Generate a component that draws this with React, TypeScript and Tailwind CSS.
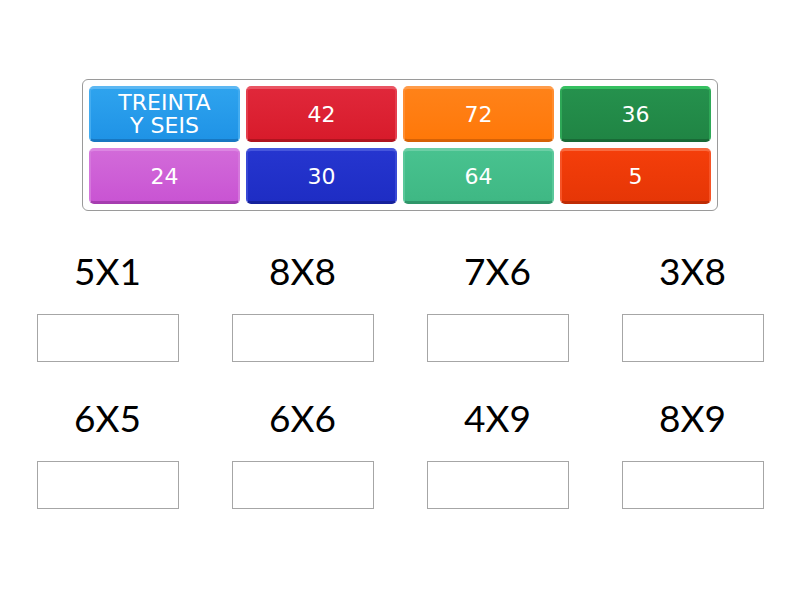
import React from 'react'

interface Tile {
  label: string
  cls: string
}

const tiles: Tile[] = [
  { label: 'TREINTA\nY SEIS', cls: 'bg-gradient-to-b from-[#2ea3ee] to-[#1f93e6] border-t-[#5cb8f3] border-x-[#43acf0] border-b-[#1777c2]' },
  { label: '42', cls: 'bg-gradient-to-b from-[#e0273a] to-[#d81b2b] border-t-[#ea5563] border-x-[#e43e4d] border-b-[#b0141f]' },
  { label: '72', cls: 'bg-gradient-to-b from-[#ff8218] to-[#ff7808] border-t-[#ff9c4a] border-x-[#ff8d30] border-b-[#d66206]' },
  { label: '36', cls: 'bg-gradient-to-b from-[#25914d] to-[#208544] border-t-[#35c060] border-x-[#2ea857] border-b-[#196a36]' },
  { label: '24', cls: 'bg-gradient-to-b from-[#d26ad9] to-[#c954d3] border-t-[#dc86e2] border-x-[#d577dc] border-b-[#a63db0]' },
  { label: '30', cls: 'bg-gradient-to-b from-[#2535cf] to-[#1e2dc4] border-t-[#4656dc] border-x-[#3848d6] border-b-[#15219c]' },
  { label: '64', cls: 'bg-gradient-to-b from-[#48c28f] to-[#3fb884] border-t-[#6ccfa5] border-x-[#5ac89a] border-b-[#2f9669]' },
  { label: '5', cls: 'bg-gradient-to-b from-[#f43e0a] to-[#e63606] border-t-[#f86a3f] border-x-[#f65326] border-b-[#bf2b04]' },
]

const rows = [
  ['5X1', '8X8', '7X6', '3X8'],
  ['6X5', '6X6', '4X9', '8X9'],
]

const App = () => {
  return (
    <div className="w-[800px] h-[600px] bg-white flex flex-col items-center">
      {/* Answer tiles */}
      <div className="mt-[79px] w-[636px] rounded-[6px] border border-[#9a9a9a] bg-white p-[6px] grid grid-cols-4 gap-[6px]">
        {tiles.map((t) => (
          <div
            key={t.label}
            className={`h-[56px] rounded-[5px] border-t-[3px] border-x-2 border-b-[3px] flex items-center justify-center text-center text-white text-[22px] leading-[23px] whitespace-pre-line font-['DejaVu_Sans',sans-serif] ${t.cls}`}
          >
            {t.label}
          </div>
        ))}
      </div>

      {/* Questions */}
      <div className="w-[780px] mt-[38px] flex flex-col gap-[34px]">
        {rows.map((row, r) => (
          <div key={r} className="grid grid-cols-4">
            {row.map((q) => (
              <div key={q} className="flex flex-col items-center">
                <div className="text-[37px] leading-[44px] text-black font-['Lato',sans-serif]">{q}</div>
                <div className="mt-[21px] w-[142px] h-[48px] border border-[#a6a6a6] bg-white" />
              </div>
            ))}
          </div>
        ))}
      </div>
    </div>
  )
}

export default App
